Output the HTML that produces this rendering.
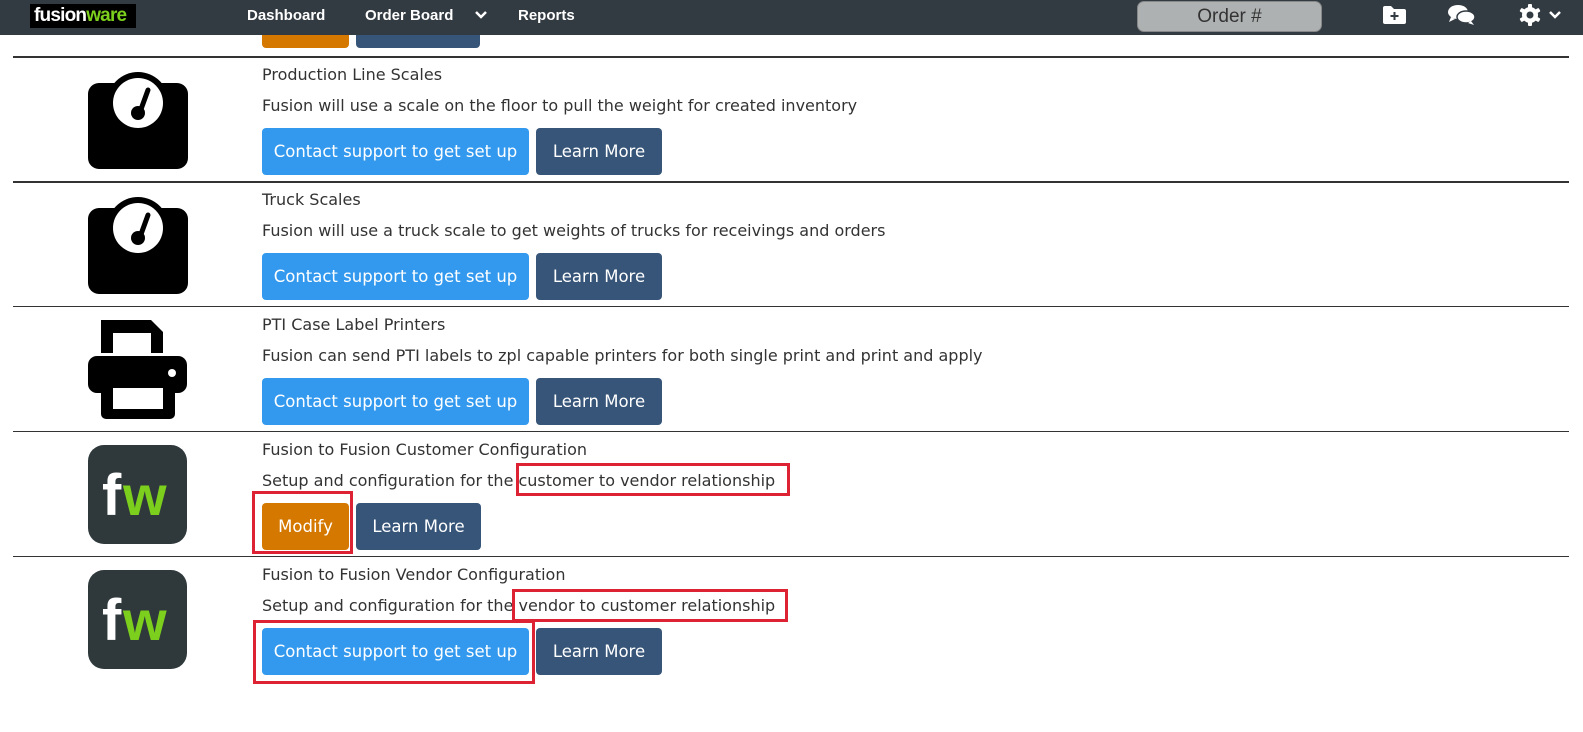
<!DOCTYPE html>
<html><head><meta charset="utf-8"><style>
*{box-sizing:border-box;margin:0;padding:0}
body{width:1583px;height:732px;overflow:hidden;background:#fff;font-family:"Liberation Sans",sans-serif;color:#333;position:relative}
.nav{position:absolute;left:0;top:0;width:1583px;height:35px;background:#323a42;z-index:5}
.logo{position:absolute;left:30px;top:4px;width:106px;height:24px;background:#000;color:#fff;font-weight:bold;font-size:19px;line-height:24px;padding-left:4px;letter-spacing:-0.8px}
.logo span{color:#7ccf1c}
.nl{position:absolute;top:7px;color:#fff;font-weight:bold;font-size:15px}
.order{position:absolute;left:1137px;top:1px;width:185px;height:31px;background:#aeb1b2;border-radius:7px;border:1px solid #888;color:#333;font-size:19px;text-align:center;line-height:30px}
.line{position:absolute;left:13px;width:1556px;height:2px;background:#333}
.btn{position:absolute;height:47px;border-radius:4px;color:#fff;line-height:47px;text-align:center;font-family:"DejaVu Sans","Liberation Sans",sans-serif;font-size:16.5px}
.blue{background:#3399ee}.navy{background:#375578}.orange{background:#d47800}
.t{position:absolute;left:262px;font-family:"DejaVu Sans","Liberation Sans",sans-serif;font-size:16px;color:#333}
.icon{position:absolute;left:88px}
.red{position:absolute;border:3px solid #dd2233}
</style></head><body>
<div class="btn orange" style="left:262px;top:1px;width:87px"></div>
<div class="btn navy" style="left:356px;top:1px;width:124px"></div>
<div class="nav">
<div class="logo">fusion<span>ware</span></div>
<div class="nl" style="left:247px">Dashboard</div>
<div class="nl" style="left:365px">Order Board</div>
<svg style="position:absolute;left:474px;top:10px" width="14" height="10" viewBox="0 0 14 10"><path d="M2 2l5 5 5-5" stroke="#fff" stroke-width="2.5" fill="none"/></svg>
<div class="nl" style="left:518px">Reports</div>
<div class="order">Order #</div>
<svg style="position:absolute;left:1382px;top:5px" width="25" height="20" viewBox="0 0 25 20"><path d="M1 3a2 2 0 0 1 2-2h6l3 3h10a2 2 0 0 1 2 2v11a2 2 0 0 1-2 2H3a2 2 0 0 1-2-2z" fill="#fff"/><path d="M12.5 7v8M8.5 11h8" stroke="#323a42" stroke-width="2"/></svg>
<svg style="position:absolute;left:1447px;top:4px" width="30" height="22" viewBox="0 0 30 22"><ellipse cx="11" cy="8" rx="10" ry="7" fill="#fff"/><path d="M4 13l-2 5 6-3z" fill="#fff"/><ellipse cx="19" cy="13" rx="9" ry="6" fill="#fff" stroke="#323a42" stroke-width="1.5"/><path d="M24 17l3 4-6-2z" fill="#fff"/></svg>
<svg style="position:absolute;left:1518px;top:3px" width="24" height="24" viewBox="0 0 24 24"><g fill="#fff"><circle cx="12" cy="12" r="8"/><rect x="10" y="1" width="4" height="22" rx="1"/><rect x="10" y="1" width="4" height="22" rx="1" transform="rotate(60 12 12)"/><rect x="10" y="1" width="4" height="22" rx="1" transform="rotate(120 12 12)"/></g><circle cx="12" cy="12" r="3.5" fill="#323a42"/></svg>
<svg style="position:absolute;left:1548px;top:10px" width="14" height="10" viewBox="0 0 14 10"><path d="M2 2l5 5 5-5" stroke="#fff" stroke-width="2.5" fill="none"/></svg>
</div>

<div class="line" style="top:56px"></div>
<div class="line" style="top:181px"></div>
<div class="line" style="top:306px;height:1px"></div>
<div class="line" style="top:431px;height:1px"></div>
<div class="line" style="top:556px;height:1px"></div>

<!-- row1 -->
<svg class="icon" style="top:70px" width="100" height="100" viewBox="0 0 100 100"><circle cx="50" cy="33" r="31" fill="#000"/><rect x="0" y="13" width="100" height="86" rx="11" fill="#000"/><circle cx="50" cy="33" r="25" fill="#fff"/><path d="M60 20l-8 22" stroke="#000" stroke-width="5" stroke-linecap="round"/><circle cx="50" cy="43" r="7" fill="#000"/></svg>
<div class="t" style="top:65px">Production Line Scales</div>
<div class="t" style="top:96px">Fusion will use a scale on the floor to pull the weight for created inventory</div>
<div class="btn blue" style="left:262px;top:128px;width:267px">Contact support to get set up</div>
<div class="btn navy" style="left:536px;top:128px;width:126px">Learn More</div>

<!-- row2 -->
<svg class="icon" style="top:195px" width="100" height="100" viewBox="0 0 100 100"><circle cx="50" cy="33" r="31" fill="#000"/><rect x="0" y="13" width="100" height="86" rx="11" fill="#000"/><circle cx="50" cy="33" r="25" fill="#fff"/><path d="M60 20l-8 22" stroke="#000" stroke-width="5" stroke-linecap="round"/><circle cx="50" cy="43" r="7" fill="#000"/></svg>
<div class="t" style="top:190px">Truck Scales</div>
<div class="t" style="top:221px">Fusion will use a truck scale to get weights of trucks for receivings and orders</div>
<div class="btn blue" style="left:262px;top:253px;width:267px">Contact support to get set up</div>
<div class="btn navy" style="left:536px;top:253px;width:126px">Learn More</div>

<!-- row3 -->
<svg class="icon" style="top:320px" width="100" height="100" viewBox="0 0 100 100"><path d="M13 0h50l12 12v21H63V13H25v20H13z" fill="#000"/><rect x="0" y="36" width="99" height="37" rx="9" fill="#000"/><rect x="13" y="60" width="74" height="39" rx="5" fill="#000"/><rect x="25" y="68" width="50" height="21" fill="#fff"/><circle cx="84" cy="53" r="4" fill="#fff"/></svg>
<div class="t" style="top:315px">PTI Case Label Printers</div>
<div class="t" style="top:346px">Fusion can send PTI labels to zpl capable printers for both single print and print and apply</div>
<div class="btn blue" style="left:262px;top:378px;width:267px">Contact support to get set up</div>
<div class="btn navy" style="left:536px;top:378px;width:126px">Learn More</div>

<!-- row4 -->
<svg class="icon" style="top:445px" width="100" height="100" viewBox="0 0 100 100"><rect x="0" y="0" width="99" height="99" rx="16" fill="#2f393b"/><text x="14" y="70" font-family="Liberation Sans,sans-serif" font-weight="bold" font-size="58" fill="#fff">f</text><text x="35" y="70" font-family="Liberation Sans,sans-serif" font-weight="bold" font-size="56" fill="#7ccf1c" letter-spacing="-2">w</text></svg>
<div class="t" style="top:440px">Fusion to Fusion Customer Configuration</div>
<div class="t" style="top:471px">Setup and configuration for the customer to vendor relationship</div>
<div class="btn orange" style="left:262px;top:503px;width:87px">Modify</div>
<div class="btn navy" style="left:356px;top:503px;width:125px">Learn More</div>

<!-- row5 -->
<svg class="icon" style="top:570px" width="100" height="100" viewBox="0 0 100 100"><rect x="0" y="0" width="99" height="99" rx="16" fill="#2f393b"/><text x="14" y="70" font-family="Liberation Sans,sans-serif" font-weight="bold" font-size="58" fill="#fff">f</text><text x="35" y="70" font-family="Liberation Sans,sans-serif" font-weight="bold" font-size="56" fill="#7ccf1c" letter-spacing="-2">w</text></svg>
<div class="t" style="top:565px">Fusion to Fusion Vendor Configuration</div>
<div class="t" style="top:596px">Setup and configuration for the vendor to customer relationship</div>
<div class="btn blue" style="left:262px;top:628px;width:267px">Contact support to get set up</div>
<div class="btn navy" style="left:536px;top:628px;width:126px">Learn More</div>

<div class="red" style="left:516px;top:463px;width:274px;height:33px"></div>
<div class="red" style="left:252px;top:491px;width:101px;height:63px"></div>
<div class="red" style="left:512px;top:589px;width:276px;height:33px"></div>
<div class="red" style="left:253px;top:620px;width:282px;height:64px"></div>
</body></html>
